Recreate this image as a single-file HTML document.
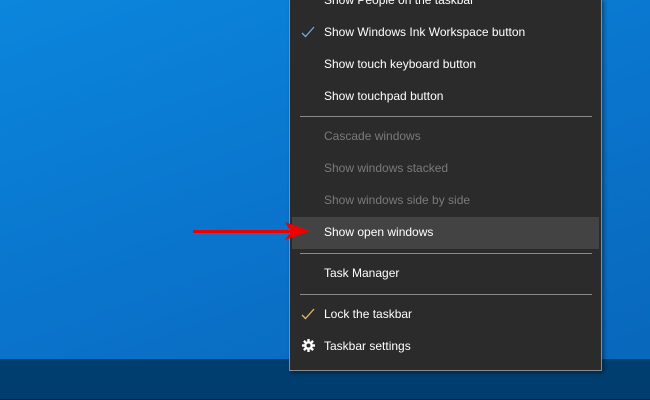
<!DOCTYPE html><html><head><style>
body{margin:0;width:650px;height:400px;overflow:hidden;position:relative;font-family:"Liberation Sans",sans-serif;background:linear-gradient(160deg,#0b86dc 0%,#0a74cc 50%,#0866b8 100%)}
.tb{position:absolute;left:0;top:359px;width:650px;height:40px;background:#003e6f}
.bl{position:absolute;left:0;top:399px;width:650px;height:1px;background:#0a1a2a}
.m{position:absolute;left:289px;top:-2px;width:311px;height:371px;background:#2b2b2b;border:1px solid #8c8c8c;box-shadow:2px 2px 4px rgba(0,0,0,.4)}
.t{position:absolute;left:34px;font-size:12px;color:#fff;line-height:16px}
.d{color:#7a7a7a}
.s{position:absolute;left:10px;width:292px;height:1px;background:#8a8a8a}
.hl{position:absolute;left:2px;top:218px;width:307px;height:32px;background:#434343}
.ck{position:absolute;left:11px}
</style></head><body>
<div class="tb"></div><div class="bl"></div>
<div class="m">
<div class="hl"></div>
<div class="t" style="top:-7px">Show People on the taskbar</div>
<svg class="ck" style="top:27px" width="14" height="12"><path d="M1 7 L4.5 10.5 L13 1" stroke="#6fa8dc" stroke-width="1.3" fill="none"/></svg>
<div class="t" style="top:25px">Show Windows Ink Workspace button</div>
<div class="t" style="top:57px">Show touch keyboard button</div>
<div class="t" style="top:89px">Show touchpad button</div>
<div class="s" style="top:117px"></div>
<div class="t d" style="top:129px">Cascade windows</div>
<div class="t d" style="top:161px">Show windows stacked</div>
<div class="t d" style="top:193px">Show windows side by side</div>
<div class="t" style="top:225px">Show open windows</div>
<div class="s" style="top:254px"></div>
<div class="t" style="top:266px">Task Manager</div>
<div class="s" style="top:295px"></div>
<svg class="ck" style="top:309px" width="14" height="12"><path d="M1 7 L4.5 10.5 L13 1" stroke="#e8b860" stroke-width="1.3" fill="none"/></svg>
<div class="t" style="top:307px">Lock the taskbar</div>
<svg class="ck" style="top:340px;left:12px" width="13" height="13" viewBox="0 0 13 13"><g fill="#fff"><circle cx="6.5" cy="6.5" r="4.3"/><rect x="5.3" y="0" width="2.4" height="13"/><rect x="0" y="5.3" width="13" height="2.4"/><rect x="5.3" y="0" width="2.4" height="13" transform="rotate(45 6.5 6.5)"/><rect x="5.3" y="0" width="2.4" height="13" transform="rotate(-45 6.5 6.5)"/></g><circle cx="6.5" cy="6.5" r="2" fill="#2b2b2b"/></svg>
<div class="t" style="top:339px">Taskbar settings</div>
</div>
<svg style="position:absolute;left:190px;top:220px" width="120" height="24"><polygon points="3,10 100,10 95,2 120,11 95,20 100,13 3,13" fill="#e00" /></svg>
</body></html>
